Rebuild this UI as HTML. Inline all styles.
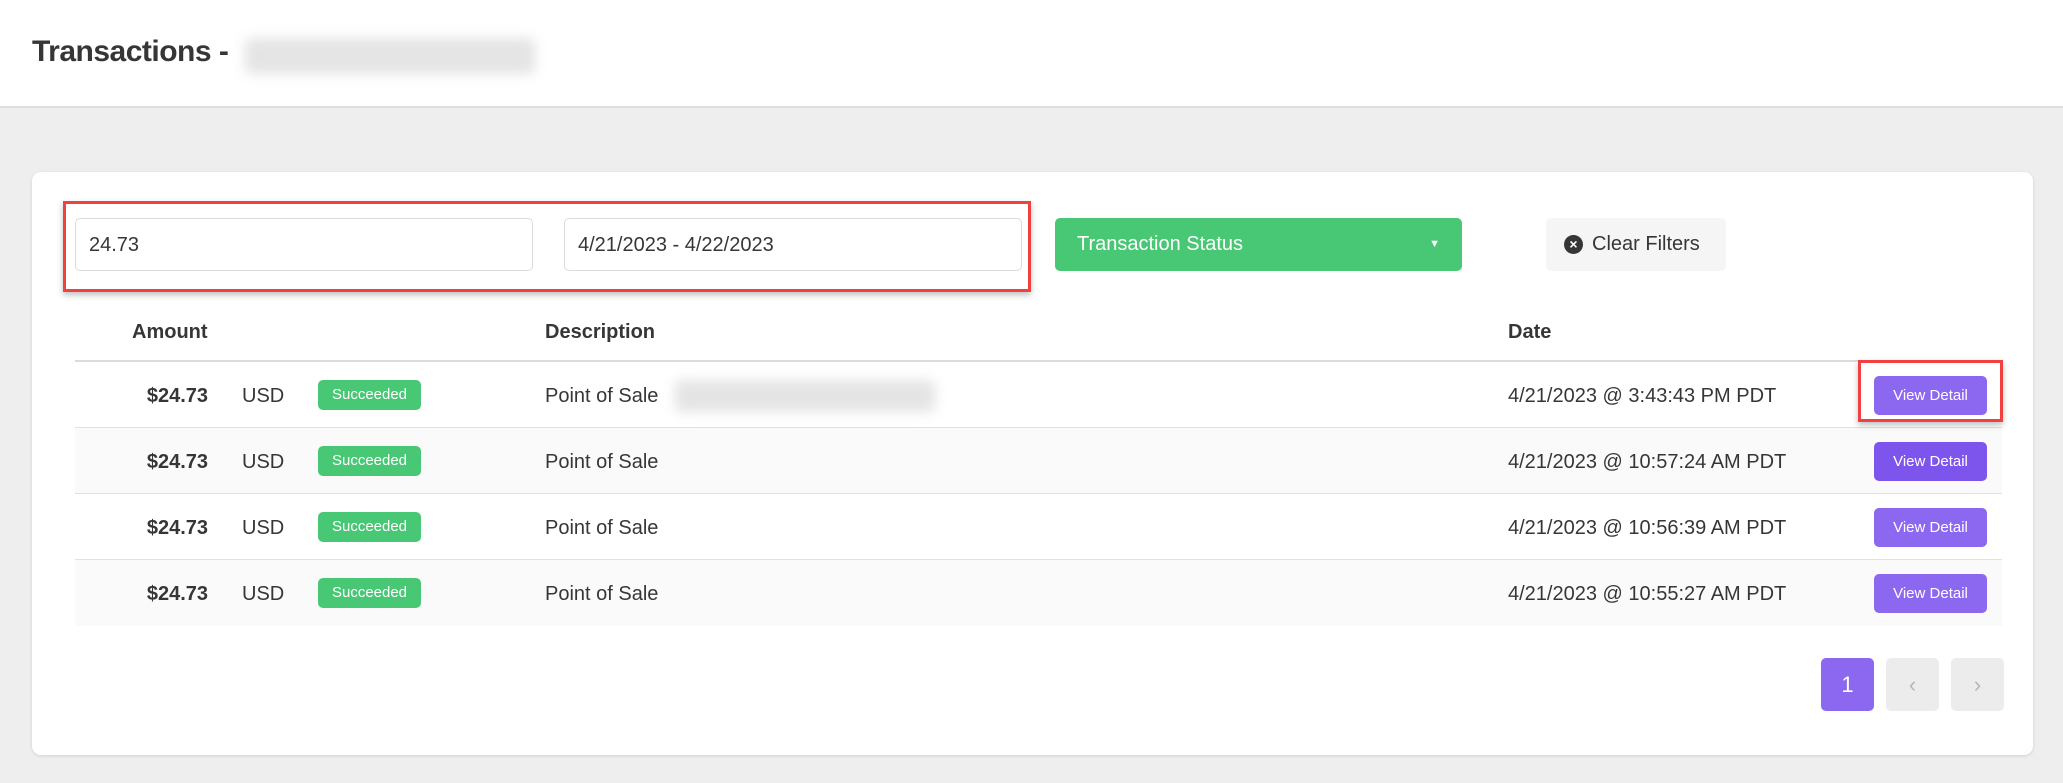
<!DOCTYPE html>
<html><head><style>
*{box-sizing:border-box;margin:0;padding:0}
body{width:2063px;height:783px;background:#eeeeee;font-family:"Liberation Sans",sans-serif;color:#363636;position:relative;overflow:hidden}
.abs{position:absolute}
.hdr{left:0;top:0;width:2063px;height:108px;background:#fff;border-bottom:2px solid #dedede}
.title{left:32px;top:35px;font-size:30px;font-weight:bold;color:#363636;letter-spacing:-0.5px}
.blur{background:#e4e4e4;filter:blur(6px);border-radius:6px}
.card{left:32px;top:172px;width:2001px;height:583px;background:#fff;border-radius:9px;box-shadow:0 1px 3px rgba(0,0,0,.12)}
.inp{top:218px;height:53px;border:1px solid #dbdbdb;border-radius:5px;background:#fff;font-size:20px;padding:0 13px;line-height:53px;color:#363636}
.red{border:3px solid #f14040;box-shadow:0 3px 6px rgba(0,0,0,.25)}
.btn{border-radius:5px;font-size:20px;color:#fff}
.th{top:321px;font-size:20px;font-weight:bold;color:#363636}
.row{left:75px;width:1927px;height:66px;border-bottom:1px solid #e2e2e2}
.cell{font-size:20px;line-height:68px;top:0}
.badge{left:243px;top:18px;width:103px;height:30px;background:#48c774;color:#fff;border-radius:5px;font-size:15px;text-align:center;line-height:30px}
.vd{left:1799px;top:14px;width:113px;height:39px;background:#8c67ef;color:#fff;border-radius:5px;font-size:15px;text-align:center;line-height:39px}
.pg{top:658px;width:53px;height:53px;border-radius:5px;text-align:center;line-height:53px;font-size:22px}
</style></head><body>
<div class="abs hdr"></div>
<div class="abs title">Transactions -</div>
<div class="abs blur" style="left:245px;top:38px;width:290px;height:36px"></div>
<div class="abs card"></div>
<div class="abs red" style="left:63px;top:201px;width:968px;height:91px"></div>
<div class="abs inp" style="left:75px;width:458px">24.73</div>
<div class="abs inp" style="left:564px;width:458px">4/21/2023 - 4/22/2023</div>
<div class="abs btn" style="left:1055px;top:218px;width:407px;height:53px;background:#48c774;line-height:53px;padding-left:22px">Transaction Status<span style="position:absolute;right:22px;top:0;font-size:11px">&#9660;</span></div>
<div class="abs btn" style="left:1546px;top:218px;width:180px;height:53px;background:#f5f5f5;color:#363636;display:flex;align-items:center;padding-left:18px"><span style="display:inline-block;width:19px;height:19px;border-radius:50%;background:#363636;color:#fff;font-size:14px;line-height:19px;text-align:center;font-weight:bold;margin-right:9px">&#215;</span>Clear Filters</div>
<div class="abs th" style="left:132px">Amount</div>
<div class="abs th" style="left:545px">Description</div>
<div class="abs th" style="left:1508px">Date</div>
<div class="abs" style="left:75px;top:360px;width:1927px;height:2px;background:#dbdbdb"></div>

<div class="abs row" style="top:362px;background:#fff">
<div class="abs cell" style="right:1794px;font-weight:bold">$24.73</div>
<div class="abs cell" style="left:167px">USD</div>
<div class="abs badge">Succeeded</div>
<div class="abs cell" style="left:470px">Point of Sale</div>
<div class="abs blur" style="left:600px;top:18px;width:260px;height:32px"></div>
<div class="abs cell" style="left:1433px">4/21/2023 @ 3:43:43 PM PDT</div>
<div class="abs vd">View Detail</div>
</div>
<div class="abs row" style="top:428px;background:#fafafa">
<div class="abs cell" style="right:1794px;font-weight:bold">$24.73</div>
<div class="abs cell" style="left:167px">USD</div>
<div class="abs badge">Succeeded</div>
<div class="abs cell" style="left:470px">Point of Sale</div>
<div class="abs cell" style="left:1433px">4/21/2023 @ 10:57:24 AM PDT</div>
<div class="abs vd" style="background:#7d55ec">View Detail</div>
</div>
<div class="abs row" style="top:494px;background:#fff">
<div class="abs cell" style="right:1794px;font-weight:bold">$24.73</div>
<div class="abs cell" style="left:167px">USD</div>
<div class="abs badge">Succeeded</div>
<div class="abs cell" style="left:470px">Point of Sale</div>
<div class="abs cell" style="left:1433px">4/21/2023 @ 10:56:39 AM PDT</div>
<div class="abs vd">View Detail</div>
</div>
<div class="abs row" style="top:560px;background:#fafafa;border-bottom:none">
<div class="abs cell" style="right:1794px;font-weight:bold">$24.73</div>
<div class="abs cell" style="left:167px">USD</div>
<div class="abs badge">Succeeded</div>
<div class="abs cell" style="left:470px">Point of Sale</div>
<div class="abs cell" style="left:1433px">4/21/2023 @ 10:55:27 AM PDT</div>
<div class="abs vd">View Detail</div>
</div>
<div class="abs red" style="left:1858px;top:360px;width:145px;height:62px;border-width:3px"></div>

<div class="abs pg" style="left:1821px;background:#8c67ef;color:#fff">1</div>
<div class="abs pg" style="left:1886px;background:#ececec;color:#b5b5b5">&#8249;</div>
<div class="abs pg" style="left:1951px;background:#ececec;color:#b5b5b5">&#8250;</div>
</body></html>
